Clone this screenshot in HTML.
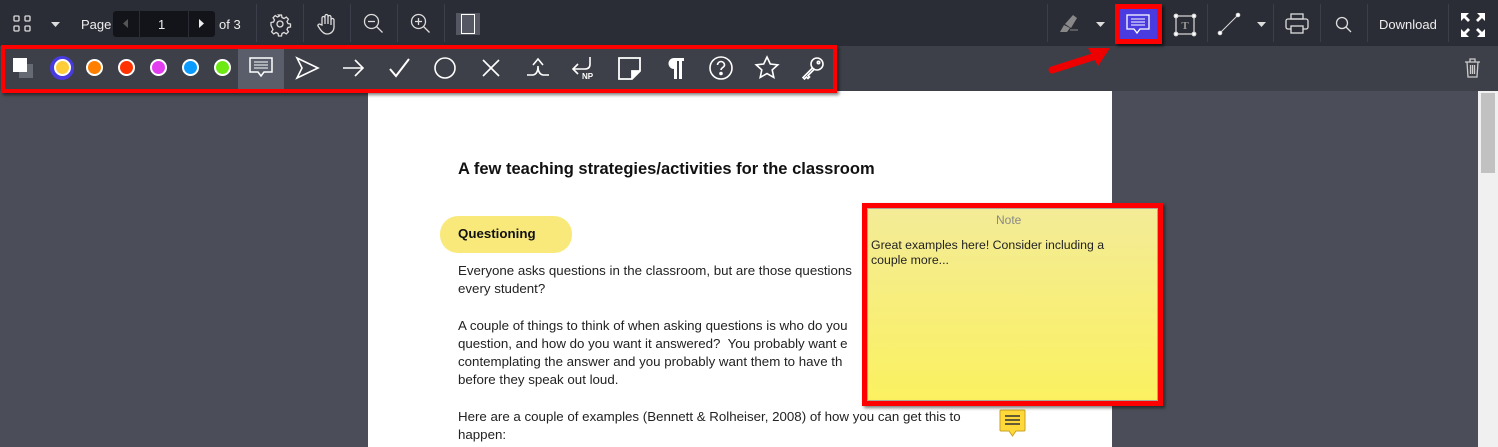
<!DOCTYPE html>
<html><head><meta charset="utf-8"><style>
*{margin:0;padding:0;box-sizing:border-box}
body{width:1498px;height:447px;overflow:hidden;background:#4b4e58;font-family:"Liberation Sans",sans-serif;position:relative}
.abs{position:absolute}
#top{left:0;top:0;width:1498px;height:46px;background:#2b2d36}
#sec{left:0;top:46px;width:1498px;height:45px;background:#3d4049}
.sep{position:absolute;top:4px;width:1px;height:38px;background:#3c3f49}
.dot{position:absolute;width:17px;height:17px;border-radius:50%;border:2px solid #fff;top:59px}
svg{position:absolute;overflow:visible}
.pt{position:absolute;left:458px;font-family:"Liberation Sans",sans-serif;font-size:13.3px;color:#222;line-height:18px;white-space:nowrap}
</style></head><body>
<div id="top" class="abs"></div>
<div id="sec" class="abs"></div>
<div class="abs" style="left:368px;top:91px;width:744px;height:356px;background:#fff"></div>
<div class="abs" style="left:1478px;top:91px;width:20px;height:356px;background:#f0f0f0"></div>
<div class="abs" style="left:1481px;top:93px;width:14px;height:80px;background:#c1c1c1"></div>

<svg style="left:13px;top:15px" width="20" height="18" fill="none" stroke="#ddd" stroke-width="1.3"><rect x="1" y="1" width="5" height="5" rx="1"/><rect x="12" y="1" width="5" height="5" rx="1"/><rect x="1" y="11" width="5" height="5" rx="1"/><rect x="12" y="11" width="5" height="5" rx="1"/></svg>
<svg style="left:51px;top:22px" width="10" height="6"><path d="M0 0H9L4.5 5Z" fill="#ddd"/></svg>
<div class="abs" style="left:81px;top:17px;color:#eee;font-size:13px">Page</div>
<div class="abs" style="left:113px;top:11px;width:102px;height:26px;background:#12141a;border-radius:3px"></div>
<div class="abs" style="left:139px;top:11px;width:1px;height:26px;background:#2b2d36"></div>
<div class="abs" style="left:188px;top:11px;width:1px;height:26px;background:#2b2d36"></div>
<svg style="left:123px;top:19px" width="6" height="10"><path d="M5 0V9L0 4.5Z" fill="#555"/></svg>
<svg style="left:199px;top:19px" width="6" height="10"><path d="M0 0V9L5 4.5Z" fill="#eee"/></svg>
<div class="abs" style="left:158px;top:17px;color:#eee;font-size:13px">1</div>
<div class="abs" style="left:219px;top:17px;color:#eee;font-size:13px">of 3</div>
<div class="sep" style="left:256px"></div><div class="sep" style="left:303px"></div><div class="sep" style="left:350px"></div><div class="sep" style="left:397px"></div><div class="sep" style="left:444px"></div>
<svg style="left:270px;top:14px" width="20" height="20" fill="none" stroke="#ddd" stroke-width="1.3"><circle cx="10" cy="10" r="3"/><path d="M8.5 1h3l.5 2.5 2 1 2.3-1.4 2.1 2.1-1.4 2.300 1 2 2.5.5v3l-2.5.5-1 2 1.4 2.3-2.1 2.1-2.3-1.4-2 1-.5 2.5h-3l-.5-2.5-2-1-2.3 1.4-2.1-2.1 1.4-2.3-1-2L1 11.5v-3l2.5-.5 1-2-1.4-2.3 2.1-2.1 2.3 1.4 2-1z"/></svg>
<svg style="left:317px;top:13px" width="20" height="22" fill="none" stroke="#ddd" stroke-width="1.3"><path d="M5 12V5a1.5 1.5 0 013 0v6V3a1.5 1.5 0 013 0v8V4a1.5 1.5 0 013 0v8V7a1.5 1.5 0 013 0v7c0 4-3 7-7 7-3 0-5-2-7-5l-2-3a1.5 1.5 0 012.5-1.5z"/></svg>
<svg style="left:363px;top:13px" width="22" height="22" fill="none" stroke="#ddd" stroke-width="1.3"><circle cx="8.5" cy="8.5" r="7"/><path d="M5 8.5h7M13.5 13.5l6 6"/></svg>
<svg style="left:410px;top:13px" width="22" height="22" fill="none" stroke="#ddd" stroke-width="1.3"><circle cx="8.5" cy="8.5" r="7"/><path d="M5 8.5h7M8.5 5v7M13.5 13.5l6 6"/></svg>
<div class="abs" style="left:456px;top:13px;width:24px;height:22px;background:#555862"></div>
<div class="abs" style="left:461px;top:14px;width:14px;height:20px;border:1.5px solid #fff"></div>

<div class="sep" style="left:1047px"></div><div class="sep" style="left:1207px"></div><div class="sep" style="left:1273px"></div><div class="sep" style="left:1320px"></div><div class="sep" style="left:1367px"></div><div class="sep" style="left:1448px"></div>
<svg style="left:1058px;top:14px" width="22" height="20"><path d="M2 18l4-7 6 3-3 4zM7 10l8-9 4 3-6 10z" fill="#888"/><path d="M12 16h8" stroke="#888"/></svg>
<svg style="left:1096px;top:22px" width="10" height="6"><path d="M0 0H9L4.5 5Z" fill="#ddd"/></svg>
<div class="abs" style="left:1115px;top:4px;width:47px;height:40px;background:#f00;box-shadow:2px 2px 3px rgba(0,0,0,.6)"></div>
<div class="abs" style="left:1120px;top:9px;width:37px;height:30px;background:#4a3be0"></div>
<svg style="left:1126px;top:14px" width="24" height="22" fill="none" stroke="#fff" stroke-width="1.3"><path d="M1 1h22v14H14l-3 4-3-4H1z"/><path d="M5 5h14M5 8h14M5 11h14" stroke-width="1"/></svg>
<svg style="left:1174px;top:14px" width="22" height="22" fill="none" stroke="#ddd" stroke-width="1.2"><rect x="2" y="2" width="18" height="18"/><circle cx="2" cy="2" r="1.8" fill="#fff"/><circle cx="20" cy="2" r="1.8" fill="#fff"/><circle cx="2" cy="20" r="1.8" fill="#fff"/><circle cx="20" cy="20" r="1.8" fill="#fff"/><text x="11" y="15" text-anchor="middle" font-size="11" font-weight="bold" fill="#999" stroke="none" font-family="Liberation Serif">T</text></svg>
<svg style="left:1218px;top:13px" width="22" height="22" fill="none" stroke="#ddd" stroke-width="1"><path d="M2 20L20 2"/><circle cx="2" cy="20" r="1.8" fill="#fff"/><circle cx="20" cy="2" r="1.8" fill="#fff"/></svg>
<svg style="left:1257px;top:22px" width="10" height="6"><path d="M0 0H9L4.5 5Z" fill="#ddd"/></svg>
<svg style="left:1285px;top:13px" width="24" height="22" fill="none" stroke="#ddd" stroke-width="1.3"><rect x="6" y="1" width="12" height="5"/><rect x="1" y="6" width="22" height="10" rx="2"/><rect x="6" y="13" width="12" height="7" fill="#2b2d36"/></svg>
<svg style="left:1335px;top:16px" width="18" height="18" fill="none" stroke="#ddd" stroke-width="1.3"><circle cx="7" cy="7" r="5.5"/><path d="M11 11l5 5"/></svg>
<div class="abs" style="left:1379px;top:17px;color:#eee;font-size:13px">Download</div>
<svg style="left:1461px;top:13px" width="24" height="24" fill="#fff"><path d="M0 0h8L5 3l4 4-2 2-4-4-3 3zM24 0v8l-3-3-4 4-2-2 4-4-3-3zM0 24v-8l3 3 4-4 2 2-4 4 3 3zM24 24h-8l3-3-4-4 2-2 4 4 3-3z"/></svg>
<svg style="left:1464px;top:58px" width="17" height="20" fill="none" stroke="#ccc" stroke-width="1.3"><path d="M1 4h15M6 4V1h5v3M3 4l1 15h9l1-15M6.5 7v9M8.5 7v9M10.5 7v9"/></svg>

<svg style="left:1048px;top:44px" width="64" height="32"><path d="M4 26L48 12" stroke="#e00" stroke-width="7" stroke-linecap="round"/><path d="M40 4L62 4 50 22Z" fill="#e00"/></svg>

<div class="abs" style="left:1px;top:45px;width:836px;height:48px;border:4px solid #f00;box-shadow:2px 2px 3px rgba(0,0,0,.5)"></div>
<div class="abs" style="left:238px;top:49px;width:46px;height:40px;background:#5a5e6b"></div>
<div class="abs" style="left:19px;top:64px;width:14px;height:14px;background:#666a73"></div>
<div class="abs" style="left:13px;top:58px;width:14px;height:14px;background:#fff"></div>
<div class="abs" style="left:50px;top:56px;width:24px;height:24px;border-radius:50%;background:#4a3be0"></div>
<div class="dot" style="left:53.5px;background:#ffcd3a"></div>
<div class="dot" style="left:85.5px;background:#ff7f00"></div>
<div class="dot" style="left:117.5px;background:#ff3300"></div>
<div class="dot" style="left:149.5px;background:#e23ef0"></div>
<div class="dot" style="left:181.5px;background:#0a9bff"></div>
<div class="dot" style="left:213.5px;background:#6dea14"></div>
<svg style="left:249px;top:57px" width="24" height="22" fill="none" stroke="#fff" stroke-width="1.5"><path d="M1 1h22v14H15l-3 4-3-4H1z"/><path d="M5 5h14M5 8h14M5 11h14" stroke-width="1"/></svg>
<svg style="left:296px;top:57px" width="24" height="22" fill="none" stroke="#fff" stroke-width="1.6"><path d="M1 1l21 10L1 21l5-10z"/></svg>
<svg style="left:342px;top:58px" width="24" height="20" fill="none" stroke="#fff" stroke-width="1.6"><path d="M1 10h20M13 2l8 8-8 8"/></svg>
<svg style="left:388px;top:57px" width="24" height="22" fill="none" stroke="#fff" stroke-width="2"><path d="M2 12l6 7L21 2"/></svg>
<svg style="left:434px;top:57px" width="24" height="24" fill="none" stroke="#fff" stroke-width="1.6"><circle cx="11" cy="11" r="10"/></svg>
<svg style="left:481px;top:58px" width="22" height="22" fill="none" stroke="#fff" stroke-width="1.6"><path d="M2 2l16 16M18 2L2 18"/></svg>
<svg style="left:526px;top:57px" width="24" height="22" fill="none" stroke="#fff" stroke-width="1.6"><path d="M1 18h6q5-1 5-9 0 8 5 9h6M7 8l5-6 5 6"/></svg>
<svg style="left:572px;top:56px" width="26" height="24" fill="none" stroke="#fff" stroke-width="1.6"><path d="M18 1v7q0 5-5 5H2M6 8l-5 5 5 5"/><text x="10" y="23" font-size="8" font-weight="bold" fill="#fff" stroke="none" font-family="Liberation Sans">NP</text></svg>
<svg style="left:618px;top:57px" width="24" height="24" fill="none" stroke="#fff" stroke-width="1.8"><path d="M1 1h21v13l-8 8H1z"/><path d="M14 22v-8h8" fill="#fff"/></svg>
<svg style="left:666px;top:57px" width="20" height="24" fill="#fff"><path d="M8 1h10v3h-2v18h-3V4h-2v18H8V12a5.5 5.5 0 010-11z"/></svg>
<svg style="left:709px;top:56px" width="26" height="26" fill="none" stroke="#fff" stroke-width="1.6"><circle cx="12" cy="12" r="11"/><path d="M8.5 9a3.5 3.5 0 117 0c0 2.5-3.5 2.5-3.5 5"/><circle cx="12" cy="17.5" r="1" fill="#fff"/></svg>
<svg style="left:755px;top:56px" width="26" height="26" fill="none" stroke="#fff" stroke-width="1.6"><path d="M12 1l3.3 7 7.5.8-5.6 5.1 1.6 7.5L12 17.6l-6.8 3.8 1.6-7.5L1.2 8.8 8.7 8z"/></svg>
<svg style="left:801px;top:56px" width="26" height="26" fill="none" stroke="#fff" stroke-width="1.6"><circle cx="16" cy="8" r="6"/><circle cx="17.5" cy="6.5" r="1.2"/><path d="M11.5 12L2 21.5 3.5 23l2-2 1.5 1.5 1.5-1.5L7 19.5 13 13.5"/></svg>

<div class="abs" style="left:458px;top:160px;font-size:16.5px;font-weight:bold;color:#111">A few teaching strategies/activities for the classroom</div>
<div class="abs" style="left:440px;top:216px;width:132px;height:37px;border-radius:18px;background:#f9e97a"></div>
<div class="abs" style="left:458px;top:226px;font-size:13.3px;font-weight:bold;color:#111">Questioning</div>
<div class="pt" style="top:262px">Everyone asks questions in the classroom, but are those questions<br>every student?</div>
<div class="pt" style="top:317px">A couple of things to think of when asking questions is who do you<br>question, and how do you want it answered?&nbsp; You probably want e<br>contemplating the answer and you probably want them to have th<br>before they speak out loud.</div>
<div class="pt" style="top:408px">Here are a couple of examples (Bennett &amp; Rolheiser, 2008) of how you can get this to<br>happen:</div>
<svg style="left:999px;top:409px" width="27" height="29"><path d="M2 1h23a1 1 0 011 1v19a1 1 0 01-1 1h-8l-3.5 5-3.5-5H2a1 1 0 01-1-1V2a1 1 0 011-1z" fill="#ffd83a" stroke="#c9a323"/><path d="M6 7h15M6 11h15M6 15h15" stroke="#333" stroke-width="1.6"/></svg>
<div class="abs" style="left:862px;top:203px;width:301px;height:203px;background:#f00;box-shadow:2px 2px 3px rgba(0,0,0,.5)"></div>
<div class="abs" style="left:867px;top:208px;width:291px;height:193px;background:linear-gradient(#f3eb97,#fbf160);border:1px solid #aa9"></div>
<div class="abs" style="left:996px;top:213px;font-size:12px;color:#888">Note</div>
<div class="abs" style="left:871px;top:238px;font-size:12.3px;line-height:15px;color:#222;width:262px">Great examples here! Consider including a couple more...</div>
</body></html>
